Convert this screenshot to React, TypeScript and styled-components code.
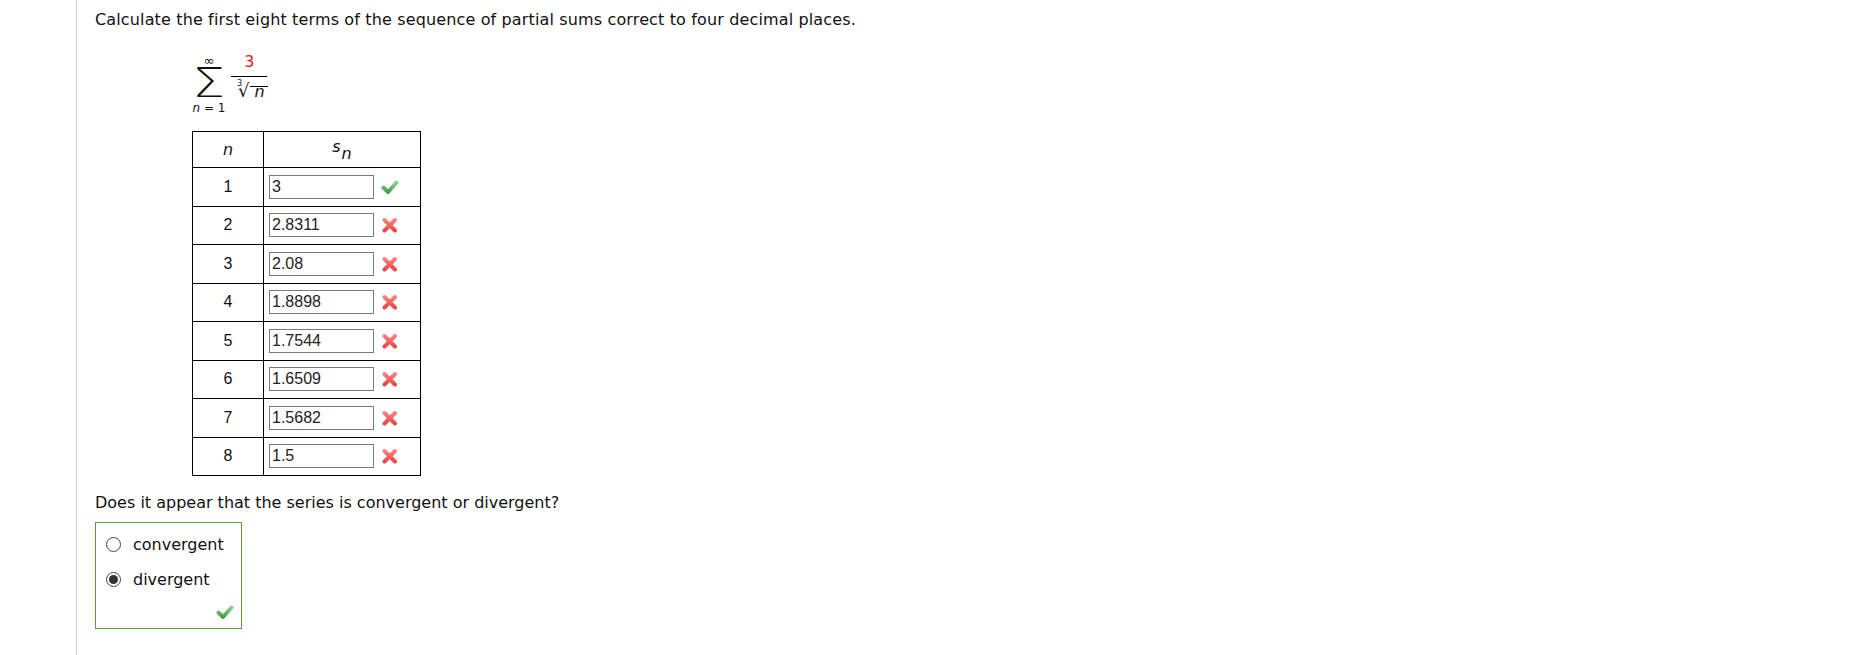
import React from "react";
import styled, { createGlobalStyle } from "styled-components";

const GlobalStyle = createGlobalStyle`
  html, body {
    margin: 0;
    padding: 0;
    background: #ffffff;
  }
`;

const Page = styled.div`
  margin-left: 76px;
  border-left: 1px solid #d4d4d4;
  min-height: 655px;
  box-sizing: border-box;
  padding: 10px 0 0 18px;
  font-family: "DejaVu Sans", Verdana, sans-serif;
  font-size: 16px;
  color: #111;
`;

const Prompt = styled.p`
  margin: 0;
  line-height: 19px;
  letter-spacing: 0.14px;
`;

const Formula = styled.div`
  display: flex;
  align-items: flex-start;
  margin: 25px 0 0 95px;
`;

const SumColumn = styled.div`
  display: flex;
  flex-direction: column;
  align-items: center;
  width: 38px;
`;

const Infinity = styled.span`
  font-size: 13px;
  line-height: 14px;
`;

const Sigma = styled.span`
  display: block;
  font-family: "DejaVu Sans", sans-serif;
  font-size: 40px;
  line-height: 31px;
  font-weight: 200;
  transform: scaleX(1.3);
`;

const Bound = styled.span`
  font-size: 12px;
  line-height: 18px;
  white-space: nowrap;
  i {
    font-style: italic;
  }
`;

const Fraction = styled.div`
  display: flex;
  flex-direction: column;
  align-items: flex-start;
  margin-left: 3px;
`;

const Numerator = styled.span`
  align-self: center;
  color: #e41b1b;
  line-height: 16px;
  padding: 0 0 6px 0;
`;

const Bar = styled.div`
  width: 36px;
  height: 1px;
  background: #000;
`;

const Radical = styled.span`
  display: flex;
  align-items: flex-start;
  margin: 3px 0 0 6px;
`;

const RootIndex = styled.span`
  font-size: 8px;
  line-height: 8px;
  margin-right: -4px;
`;

const RootSign = styled.span`
  font-size: 18px;
  line-height: 21px;
`;

const Radicand = styled.span`
  border-top: 1px solid #000;
  font-style: italic;
  line-height: 10px;
  padding: 0 3px 4px 5px;
  margin-top: 6px;
`;

const Grid = styled.table`
  border-collapse: collapse;
  margin: 14px 0 0 97px;
  font-family: "Liberation Sans", Arial, sans-serif;
  font-size: 16px;
  color: #111;
`;

const HeadRow = styled.tr`
  height: 36px;
`;

const BodyRow = styled.tr`
  height: 38.5px;
`;

const Cell = styled.td<{ $wide?: boolean }>`
  border: 1px solid #000;
  padding: 0;
  width: ${(p) => (p.$wide ? "156px" : "70px")};
  text-align: ${(p) => (p.$wide ? "left" : "center")};
`;

const HeadCell = styled(Cell)`
  text-align: center;
  font-family: "DejaVu Sans", Verdana, sans-serif;
  font-style: italic;
  font-size: 16px;
  sub {
    font-size: 16px;
    vertical-align: -7px;
    margin-left: 1px;
  }
`;

const Entry = styled.div`
  display: flex;
  align-items: center;
  gap: 7px;
  padding-left: 5px;
`;

const Field = styled.input`
  box-sizing: border-box;
  width: 105px;
  height: 24px;
  border: 1px solid #7a7a7a;
  padding: 0 3px 0 2px;
  margin: 0;
  font-family: "Liberation Sans", Arial, sans-serif;
  font-size: 16px;
  color: #222;
  background: #fff;
  outline: none;
`;

const Question = styled.p`
  margin: 17px 0 0 0;
  line-height: 19px;
`;

const Choices = styled.div`
  box-sizing: border-box;
  width: 147px;
  height: 107px;
  margin-top: 10px;
  border: 1px solid #5c9e35;
  padding: 4px 7px 0 10px;
  display: flex;
  flex-direction: column;
`;

const Choice = styled.label`
  display: flex;
  align-items: center;
  gap: 12px;
  height: 35px;
`;

const RadioDot = styled.span<{ $on?: boolean }>`
  box-sizing: border-box;
  width: 15px;
  height: 15px;
  border-radius: 50%;
  border: 1px solid #444;
  background: #fff;
  display: flex;
  align-items: center;
  justify-content: center;
  &::after {
    content: "";
    width: 9px;
    height: 9px;
    border-radius: 50%;
    background: ${(p) => (p.$on ? "#333" : "transparent")};
  }
`;

const Verdict = styled.div`
  display: flex;
  justify-content: flex-end;
  margin-top: 7px;
`;

const Check = () => (
  <svg width="18" height="16" viewBox="0 0 18 16">
    <defs>
      <linearGradient id="gok" x1="0" y1="0" x2="0" y2="1">
        <stop offset="0" stopColor="#8fd08f" />
        <stop offset="1" stopColor="#46a046" />
      </linearGradient>
    </defs>
    <path
      d="M2.5 8.5 L7 13 L15.5 3.5"
      fill="none"
      stroke="url(#gok)"
      strokeWidth="4"
      strokeLinecap="round"
      strokeLinejoin="round"
    />
  </svg>
);

const Cross = () => (
  <svg width="18" height="16" viewBox="0 0 18 16">
    <defs>
      <linearGradient id="gbad" x1="0" y1="0" x2="0" y2="1">
        <stop offset="0" stopColor="#ff8080" />
        <stop offset="1" stopColor="#e84848" />
      </linearGradient>
    </defs>
    <path
      d="M3.5 3 L14 13.5 M14 3 L3.5 13.5"
      fill="none"
      stroke="url(#gbad)"
      strokeWidth="4"
      strokeLinecap="round"
    />
  </svg>
);

const rows = [
  { n: 1, value: "3", ok: true },
  { n: 2, value: "2.8311", ok: false },
  { n: 3, value: "2.08", ok: false },
  { n: 4, value: "1.8898", ok: false },
  { n: 5, value: "1.7544", ok: false },
  { n: 6, value: "1.6509", ok: false },
  { n: 7, value: "1.5682", ok: false },
  { n: 8, value: "1.5", ok: false },
];

export default function App() {
  return (
    <>
      <GlobalStyle />
      <Page>
        <Prompt>
          Calculate the first eight terms of the sequence of partial sums correct to four decimal places.
        </Prompt>

        <Formula>
          <SumColumn>
            <Infinity>∞</Infinity>
            <Sigma>Σ</Sigma>
            <Bound>
              <i>n</i> = 1
            </Bound>
          </SumColumn>
          <Fraction>
            <Numerator>3</Numerator>
            <Bar />
            <Radical>
              <RootIndex>3</RootIndex>
              <RootSign>√</RootSign>
              <Radicand>n</Radicand>
            </Radical>
          </Fraction>
        </Formula>

        <Grid>
          <tbody>
            <HeadRow>
              <HeadCell>n</HeadCell>
              <HeadCell $wide>
                s<sub>n</sub>
              </HeadCell>
            </HeadRow>
            {rows.map((r) => (
              <BodyRow key={r.n}>
                <Cell>{r.n}</Cell>
                <Cell $wide>
                  <Entry>
                    <Field defaultValue={r.value} />
                    {r.ok ? <Check /> : <Cross />}
                  </Entry>
                </Cell>
              </BodyRow>
            ))}
          </tbody>
        </Grid>

        <Question>Does it appear that the series is convergent or divergent?</Question>
        <Choices>
          <Choice>
            <RadioDot />
            convergent
          </Choice>
          <Choice>
            <RadioDot $on />
            divergent
          </Choice>
          <Verdict>
            <Check />
          </Verdict>
        </Choices>
      </Page>
    </>
  );
}
